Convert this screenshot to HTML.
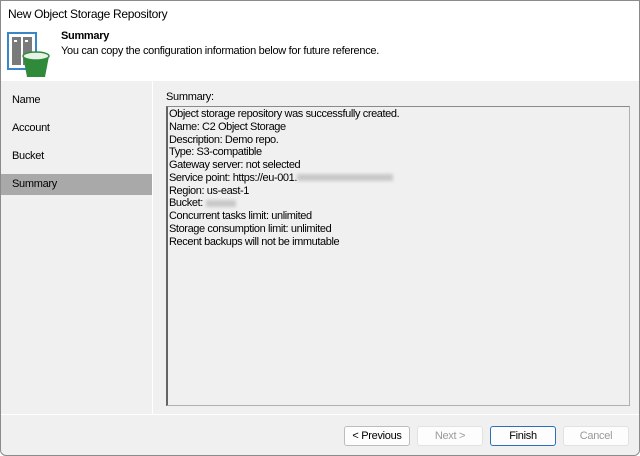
<!DOCTYPE html>
<html><head><style>
*{margin:0;padding:0;box-sizing:border-box}
body{width:640px;height:456px;overflow:hidden;background:#fff;font-family:"Liberation Sans",sans-serif;font-size:11px;letter-spacing:-0.3px;color:#000;position:relative}
.win{position:absolute;left:0;top:0;width:640px;height:456px;border:1px solid #8a8a8a;border-radius:0 0 6px 6px;background:#f0f0f0;overflow:hidden}
.title{position:absolute;left:0;top:0;width:638px;height:28px;background:#fff;padding:6px 0 0 7px;font-size:12px}
.hdr{position:absolute;left:0;top:28px;width:638px;height:52px;background:#fff}
.nav{position:absolute;left:0;top:80px;width:152px;height:334px;background:#f0f0f0;border-right:1px solid #fff}
.nav div{height:28px;padding:13px 0 0 11px}
.nav .sel{background:#a9a9a9;height:21px;padding:4px 0 0 11px;margin-top:9px}
.sep{position:absolute;left:0;top:413px;width:640px;height:1px;background:#fff}
.box{position:absolute;left:165px;top:105px;width:464px;height:300px;border:1px solid #b0b0b0;border-left:2px solid #646464;border-top:1px solid #8a8a8a;background:#f0f0f0;padding:1px 0 0 1px;line-height:12.75px;font-size:11px;letter-spacing:-0.4px}
.btn{position:absolute;top:425px;height:20px;border:1px solid #bdbdbd;border-radius:3px;background:#fdfdfd;text-align:center;font-size:11px;line-height:18px}
.blur{display:inline-block;height:7px;background:#c8c8c8;filter:blur(1.5px);vertical-align:middle}
</style></head><body>
<div class="win">
<div class="title">New Object Storage Repository</div>
<div class="hdr">
<svg style="position:absolute;left:6px;top:3px" width="44" height="46">
<rect x="1" y="1" width="28" height="36" fill="#fff" stroke="#3b86c6" stroke-width="2"/>
<rect x="5" y="5" width="9" height="28" fill="#7a7a7a"/><rect x="16" y="5" width="9" height="28" fill="#7a7a7a"/>
<rect x="7" y="8" width="3" height="2" fill="#fff"/><rect x="18" y="8" width="3" height="2" fill="#fff"/>
<path d="M16 24 L20 45 L38 45 L42 24 Z" fill="#2f8a3a"/>
<ellipse cx="29" cy="24" rx="13" ry="4" fill="#e8f3e8" stroke="#2f8a3a" stroke-width="1.5"/>
</svg>
<div style="position:absolute;left:60px;top:1px;font-weight:bold">Summary</div>
<div style="position:absolute;left:60px;top:16px">You can copy the configuration information below for future reference.</div>
</div>
<div class="nav">
<div>Name</div><div>Account</div><div>Bucket</div><div class="sel">Summary</div>
</div>
<div style="position:absolute;left:165px;top:90px">Summary:</div>
<div class="box">Object storage repository was successfully created.<br>Name: C2 Object Storage<br>Description: Demo repo.<br>Type: S3-compatible<br>Gateway server: not selected<br>Service point: https://eu-001.<span class="blur" style="width:96px"></span><br>Region: us-east-1<br>Bucket: <span class="blur" style="width:30px"></span><br>Concurrent tasks limit: unlimited<br>Storage consumption limit: unlimited<br>Recent backups will not be immutable</div>
<div class="sep"></div>
<div class="btn" style="left:343px;width:66px">&lt; Previous</div>
<div class="btn" style="left:416px;width:66px;color:#9a9a9a;border-color:#e2e2e2">Next &gt;</div>
<div class="btn" style="left:489px;width:66px;border-color:#2a6fc0">Finish</div>
<div class="btn" style="left:562px;width:66px;color:#9a9a9a;border-color:#e2e2e2">Cancel</div>
</div>
</body></html>
